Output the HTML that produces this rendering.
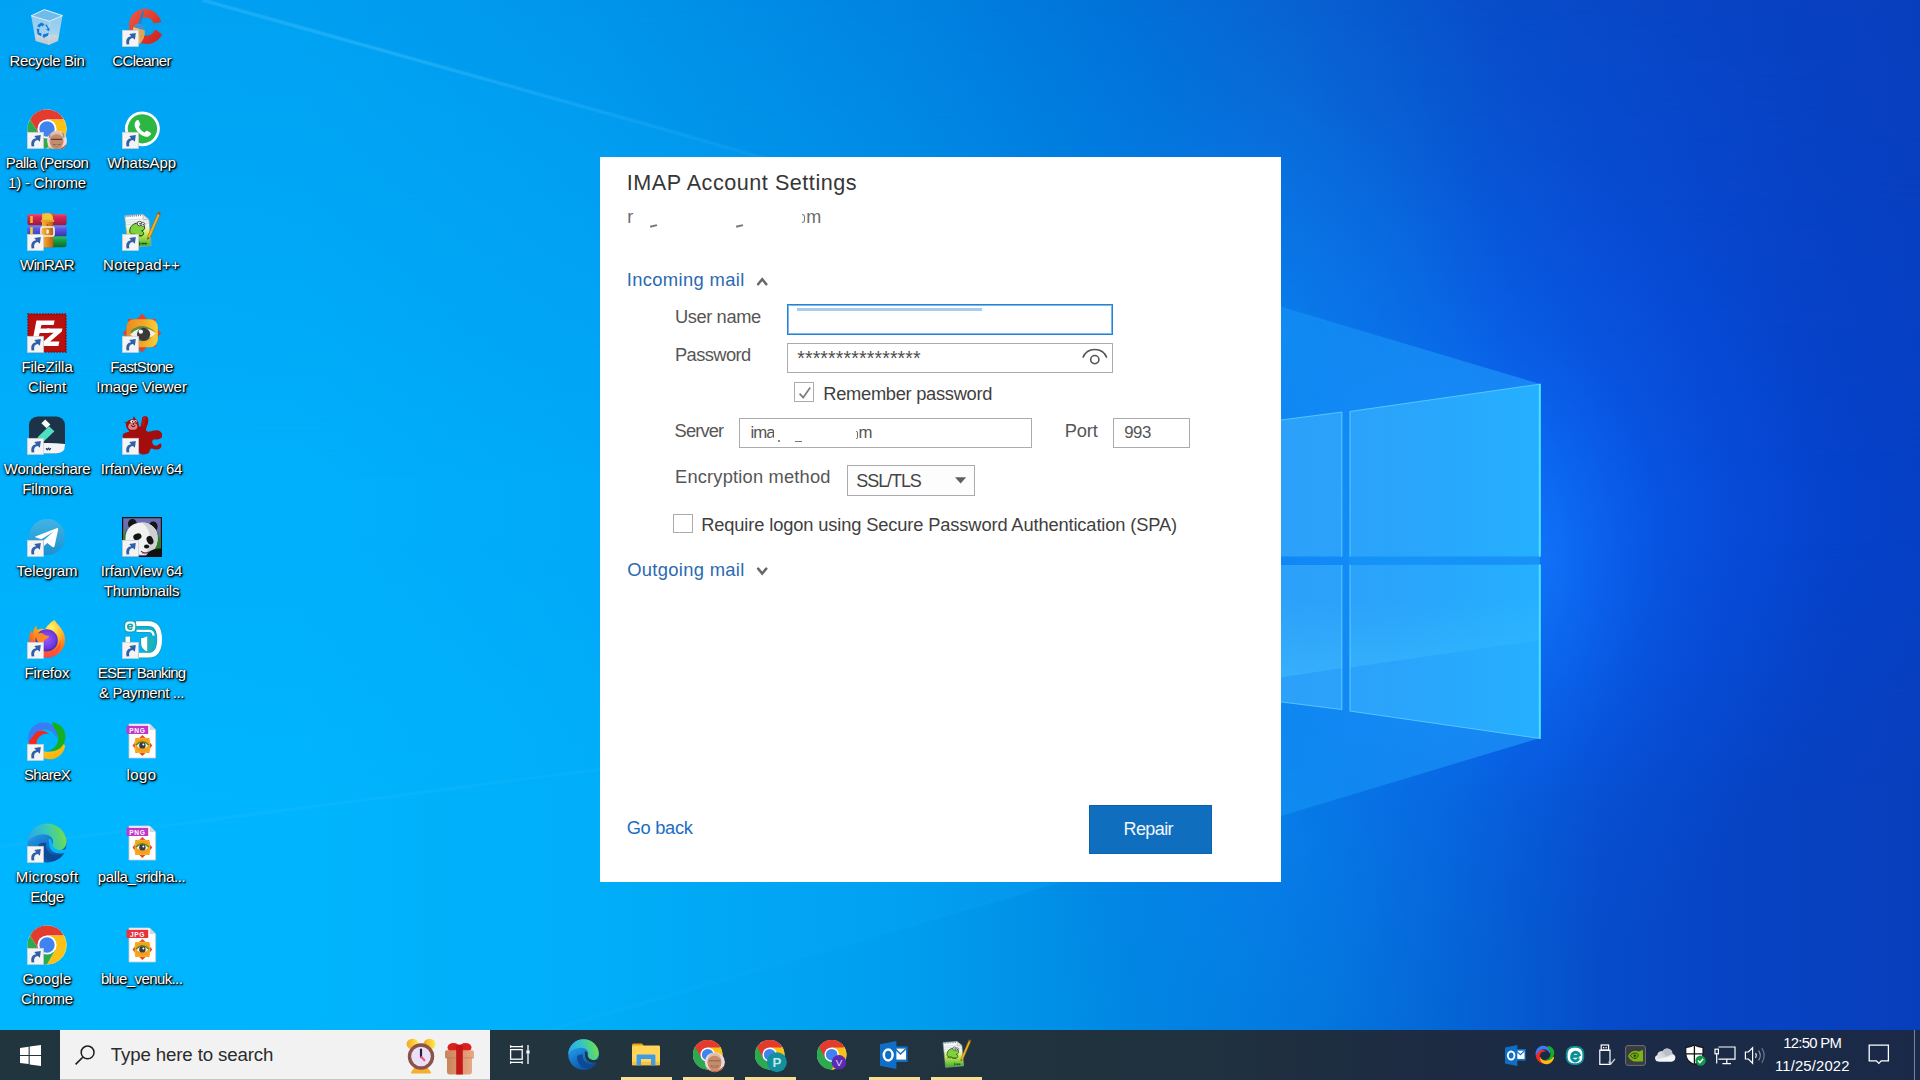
<!DOCTYPE html>
<html lang="en"><head><meta charset="utf-8"><title>IMAP Account Settings</title>
<style>
*{margin:0;padding:0;box-sizing:border-box}
html,body{width:1920px;height:1080px;overflow:hidden;background:#0078d7}
body{font-family:"Liberation Sans",sans-serif;position:relative}
#wall{position:absolute;left:0;top:0;width:1920px;height:1080px;display:block}
.abs{position:absolute}
span{position:absolute;white-space:nowrap;line-height:1}
#dlg{position:absolute;left:600px;top:157px;width:681px;height:725px;background:#fff}
#dlg span,#dlg div,#dlg svg{position:absolute}
#tb{position:absolute;left:0;top:1030px;width:1920px;height:50px}
#tb span,#tb div,#tb svg{position:absolute}
#tb svg,#dlg svg{overflow:visible}
.ic{position:absolute;width:96px;text-align:center}
.ic svg{position:absolute;left:28px;top:0;width:40px;height:40px;overflow:visible}
.ic .lb{position:absolute;left:-10px;width:116px;top:44px;color:#fff;font-size:14.4px;line-height:20px;white-space:normal;text-align:center;
 text-shadow:0 1px 2px rgba(0,0,0,.95),0 0 3px rgba(0,0,0,.7),1px 1px 1px rgba(0,0,0,.6)}
</style></head>
<body>
<svg id="wall" width="1920" height="1080" viewBox="0 0 1920 1080">
<defs>
<linearGradient id="gT" x1="0" x2="1" y1="0" y2="0"><stop offset="0.0000" stop-color="#00a0f2"/><stop offset="0.1562" stop-color="#009ef0"/><stop offset="0.3125" stop-color="#0094ea"/><stop offset="0.4688" stop-color="#0082e0"/><stop offset="0.5729" stop-color="#0072d8"/><stop offset="0.6677" stop-color="#0862d0"/><stop offset="0.7812" stop-color="#084bc8"/><stop offset="0.8854" stop-color="#0844c4"/><stop offset="1.0000" stop-color="#083ebc"/></linearGradient>
<linearGradient id="gM" x1="0" x2="1" y1="0" y2="0"><stop offset="0.0000" stop-color="#00affc"/><stop offset="0.1562" stop-color="#00affc"/><stop offset="0.3125" stop-color="#00a8f8"/><stop offset="0.4688" stop-color="#009af0"/><stop offset="0.5729" stop-color="#008cec"/><stop offset="0.6677" stop-color="#0a82ec"/><stop offset="0.7292" stop-color="#0a75e6"/><stop offset="0.7812" stop-color="#0862e6"/><stop offset="0.8333" stop-color="#0852e0"/><stop offset="0.8854" stop-color="#064ad8"/><stop offset="0.9375" stop-color="#0644ce"/><stop offset="1.0000" stop-color="#0540c6"/></linearGradient>
<linearGradient id="gB" x1="0" x2="1" y1="0" y2="0"><stop offset="0.0000" stop-color="#00b6fe"/><stop offset="0.1562" stop-color="#00b5fd"/><stop offset="0.3125" stop-color="#00adf7"/><stop offset="0.4688" stop-color="#009eee"/><stop offset="0.5990" stop-color="#0086e2"/><stop offset="0.6771" stop-color="#0278dc"/><stop offset="0.7812" stop-color="#055ed2"/><stop offset="0.8333" stop-color="#064cca"/><stop offset="0.8854" stop-color="#0645c6"/><stop offset="1.0000" stop-color="#083ebb"/></linearGradient>
<linearGradient id="gVt" gradientUnits="userSpaceOnUse" x1="0" x2="0" y1="-20" y2="480"><stop offset="0" stop-color="#fff" stop-opacity="1"/><stop offset="1" stop-color="#fff" stop-opacity="0"/></linearGradient>
<linearGradient id="gVb" gradientUnits="userSpaceOnUse" x1="0" x2="0" y1="540" y2="800"><stop offset="0" stop-color="#fff" stop-opacity="0"/><stop offset="1" stop-color="#fff" stop-opacity="1"/></linearGradient>
<mask id="mT"><rect width="1920" height="1080" fill="url(#gVt)"/></mask>
<mask id="mB"><rect width="1920" height="1080" fill="url(#gVb)"/></mask>
<radialGradient id="glow" gradientUnits="userSpaceOnUse" cx="1430" cy="560" r="400" gradientTransform="translate(1430 560) scale(1 1.1) translate(-1430 -560)">
<stop offset="0" stop-color="#0a82f8" stop-opacity=".9"/><stop offset=".3" stop-color="#0a76f4" stop-opacity=".75"/><stop offset=".6" stop-color="#0a5eea" stop-opacity=".34"/><stop offset="1" stop-color="#0850e0" stop-opacity="0"/></radialGradient>
<radialGradient id="eglow"><stop offset="0" stop-color="#1a70ff" stop-opacity=".42"/><stop offset=".5" stop-color="#0e5ef6" stop-opacity=".2"/><stop offset="1" stop-color="#0a50ec" stop-opacity="0"/></radialGradient>
<radialGradient id="haze"><stop offset="0" stop-color="#0a8af2" stop-opacity=".5"/><stop offset=".5" stop-color="#0a80ee" stop-opacity=".27"/><stop offset="1" stop-color="#0a74e8" stop-opacity="0"/></radialGradient>
<linearGradient id="beam" gradientUnits="userSpaceOnUse" x1="1540" x2="0" y1="0" y2="0"><stop offset="0" stop-color="#26a6ff" stop-opacity=".55"/><stop offset=".17" stop-color="#1aa4ff" stop-opacity=".36"/><stop offset=".45" stop-color="#08aeff" stop-opacity=".13"/><stop offset="1" stop-color="#00baff" stop-opacity=".09"/></linearGradient>
<linearGradient id="edge" gradientUnits="userSpaceOnUse" x1="1540" x2="0" y1="0" y2="0"><stop offset="0" stop-color="#48c0ff" stop-opacity="0"/><stop offset=".5" stop-color="#48c0ff" stop-opacity=".14"/><stop offset=".75" stop-color="#50c8ff" stop-opacity=".55"/><stop offset="1" stop-color="#50c8ff" stop-opacity=".4"/></linearGradient>
<linearGradient id="pane" gradientUnits="userSpaceOnUse" x1="1215" x2="1540" y1="0" y2="0"><stop offset="0" stop-color="#2f9ef8"/><stop offset=".55" stop-color="#2aa4fb"/><stop offset="1" stop-color="#25b0ff"/></linearGradient>
<linearGradient id="refl" gradientUnits="userSpaceOnUse" x1="0" x2="0" y1="600" y2="670"><stop offset="0" stop-color="#3fc0ff" stop-opacity="0"/><stop offset="1" stop-color="#45c8ff" stop-opacity=".35"/></linearGradient>
</defs>
<rect width="1920" height="1080" fill="url(#gM)"/>
<rect width="1920" height="1080" fill="url(#gT)" mask="url(#mT)"/>
<rect width="1920" height="1080" fill="url(#gB)" mask="url(#mB)"/>
<rect width="1920" height="1080" fill="url(#glow)"/>
<ellipse cx="1270" cy="335" rx="250" ry="250" fill="url(#haze)"/><ellipse cx="1270" cy="830" rx="250" ry="290" fill="url(#haze)"/>
<ellipse cx="1545" cy="561" rx="130" ry="270" fill="url(#eglow)"/>
<polygon points="1540,384 1281,307 660,128 202.5,0 -200,-113 -200,1247 596,1017 1018,895 1540,738" fill="url(#beam)"/>
<g fill="none" stroke="url(#edge)"><path d="M1540 384 L1281 307 L660 128 L202.5 0" stroke-width="4" opacity=".45"/><path d="M1540 384 L1281 307 L660 128 L202.5 0" stroke-width="1.8" opacity=".3"/>
<path d="M1540 738 L1018 895 L596 1017 L-200 1247" stroke-width="4" opacity=".2"/></g>
<path d="M-10 848 L180 823.7 L600 769.4 L1281 681" stroke="#40c8ff" stroke-opacity=".12" stroke-width="3" fill="none"/>
<polygon points="1540,384 1540,738 1349,711 1349,411" fill="#1596f6" opacity=".6"/>
<g fill="url(#pane)">
<polygon points="1349.6,411.5 1540.6,384 1540.6,556.6 1349.6,556.6"/>
<polygon points="1349.6,565 1540.6,564.6 1540.6,738.6 1349.6,711"/>
<polygon points="1215,428.6 1342.3,412 1342.3,556.6 1215,556.6"/>
<polygon points="1215,565 1342.3,565 1342.3,709.6 1215,693.6"/>
</g>
<polygon points="1349.6,565 1540.6,564.6 1540.6,640 1349.6,667.6" fill="url(#refl)"/>
<polygon points="1215,565 1342.3,565 1342.3,668 1215,687.4" fill="url(#refl)"/>
<g fill="none" stroke="#52e4fc" stroke-width="2" opacity=".92">
<line x1="1539.8" y1="384" x2="1539.8" y2="556.6"/><line x1="1539.8" y1="564.6" x2="1539.8" y2="738.6"/>
</g>
<g fill="none" stroke="#66d4ff" stroke-width="1" opacity=".75">
<line x1="1349.6" y1="411.5" x2="1540.6" y2="384"/><line x1="1349.6" y1="711" x2="1540.6" y2="738.6"/>
<line x1="1215" y1="428.6" x2="1342.3" y2="412"/><line x1="1215" y1="693.6" x2="1342.3" y2="709.6"/>
<line x1="1341.8" y1="412" x2="1341.8" y2="556.6"/><line x1="1341.8" y1="565" x2="1341.8" y2="709.6"/>
<line x1="1350.1" y1="412" x2="1350.1" y2="556.6"/><line x1="1350.1" y1="565" x2="1350.1" y2="711"/>
</g>
</svg>
<div id="icons">
<svg class="abs" style="left:27.0px;top:7px" width="40" height="40" viewBox="0 0 40 40"><defs><linearGradient id="rb1_1" x1="0" x2="0" y1="0" y2="1"><stop offset="0" stop-color="#8fc9ec"/><stop offset=".7" stop-color="#a9d6f0"/><stop offset=".72" stop-color="#d5d9de"/><stop offset="1" stop-color="#c3c8ce"/></linearGradient></defs>
<path d="M4.2 8.8 L17.4 2.6 L35.6 8.6 L31 34 L22 38 L8.6 34Z" fill="url(#rb1_1)" opacity=".96"/>
<path d="M4.2 8.8 L17.4 2.6 L35.6 8.6 L22.6 14.2Z" fill="#6fbcea"/><path d="M4.2 8.8 L17.4 2.6 L35.6 8.6 L22.6 14.2Z" fill="none" stroke="#d9f0fb" stroke-width="1"/>
<path d="M22.6 14.2 L22 38" stroke="#c7e6f6" stroke-width=".7" opacity=".8"/>
<g fill="#1777d8"><path d="M11.4 17.6 L14.4 15.6 L17.6 17.2 L15.6 19.4 L14.2 18.6 L12.8 20.4 L10.2 19.2Z"/><path d="M18.2 18 L20.8 21.6 L19.2 22.4 L22.2 24.4 L22.6 20.4 L21.4 21 L19.8 17.6Z"/><path d="M9.6 21.4 L12.4 22 L12 25.4 L14.6 26.6 L14.2 29.2 L10.6 27.2Z"/><path d="M16.4 27.2 L20.6 26.2 L21.8 25.4 L21 28.8 L17.6 30.2 L17.8 31.6 L15.4 29.6 L16.8 26.4Z"/></g></svg>
<span style="left:9.5px;top:52.60px;font-size:15px;color:#fff;letter-spacing:-0.382px;text-shadow:1px 1px 1px rgba(0,0,0,.95),1px 1px 2px rgba(0,0,0,.9),0 1px 3px rgba(0,0,0,.75),0 0 2px rgba(0,0,0,.6);">Recycle Bin</span>
<svg class="abs" style="left:121.6px;top:7px" width="40" height="40" viewBox="0 0 40 40"><defs><linearGradient id="cc1_2" x1="0" x2="1" y1="0" y2="1"><stop offset="0" stop-color="#f25a43"/><stop offset="1" stop-color="#c9201c"/></linearGradient></defs>
<path d="M39.4 15 C36.4 5.6 28 1 20.6 2 C12 3.2 6.6 10.4 7 19.6 C7.6 29.6 15 36.8 24 37 C31 37 37 33.4 40 27.4 L33.4 22.6 C31 26.4 28.4 28.8 24.2 28.8 C19 28.8 15.6 24.6 15.6 19.6 C15.6 14 19.4 10.6 24 10.6 C27.4 10.6 30.4 12.6 31.8 16.6Z" fill="url(#cc1_2)"/>
<path d="M20.4 3.8 L22.2 4.4 L18.4 19 L15.8 18.2Z" fill="#2a7fc4"/>
<path d="M11.6 19.8 C12.6 16.6 16 15.6 19.4 17 C22.4 18.4 23.4 21 22.6 23.4 L11.6 19.8Z" fill="#3a93d6"/>
<path d="M11.4 20 L22.4 23.6 C23 28.6 21.4 33.4 17.8 36.6 C13.6 36 9.6 33.6 8 30.2 C9.8 27 11 23.6 11.4 20Z" fill="#f1c27a"/><path d="M16.4 21.6 L22.4 23.6 C23 28.6 21.4 33.4 17.8 36.6 C17.4 31 17.2 26 16.4 21.6Z" fill="#e0a457"/><rect x=".3" y="23.3" width="16.2" height="16.2" fill="#f4f4f4" stroke="#c9ccd2" stroke-width=".7"/><path d="M4.6 37.6 C3.4 32.6 5.4 29.4 9.2 29.2 L7.2 27 L13.8 26 L12.9 32.8 L10.9 30.9 C8.2 31.2 6.4 33.4 7.4 37.2 Z" fill="#2f5fa8"/></svg>
<span style="left:112.2px;top:52.60px;font-size:15px;color:#fff;letter-spacing:-0.571px;text-shadow:1px 1px 1px rgba(0,0,0,.95),1px 1px 2px rgba(0,0,0,.9),0 1px 3px rgba(0,0,0,.75),0 0 2px rgba(0,0,0,.6);">CCleaner</span>
<svg class="abs" style="left:27.0px;top:109px" width="40" height="40" viewBox="0 0 40 40"><circle cx="20" cy="20" r="19.6" fill="#fff"/>
<path d="M20 10.4 H36.9 A19.5 19.5 0 0 0 3.11 10.25 L11.7 25.1Z" fill="#e33b2e"/>
<path d="M28.3 24.8 L20 39.5 A19.5 19.5 0 0 0 36.9 10.4 H20Z" fill="#fbc116"/>
<path d="M11.7 24.8 L3.11 10.25 A19.5 19.5 0 0 0 20 39.5 L28.3 24.8Z" fill="#2da94f"/>
<circle cx="20" cy="20" r="9.6" fill="#fff"/><circle cx="20" cy="20" r="7.7" fill="#3f82f0"/><clipPath id="av_3"><circle cx="30" cy="31.7" r="10"/></clipPath><g clip-path="url(#av_3)"><rect x="19" y="21" width="22" height="22" fill="#efd9dc"/>
<path d="M19 42 L21 37 Q30 45 39.4 35 L41 42Z" fill="#c6562e"/><ellipse cx="29.6" cy="31.8" rx="7" ry="8.8" fill="#c78b69"/><path d="M23 29 Q23.6 22.4 29.6 22.2 Q35.8 22.4 36.4 29 Q33.6 25.2 29.6 25.2 Q25.6 25.2 23 29Z" fill="#dcbfae"/>
<path d="M22.6 28.6 Q22.2 25 24.4 23.6 M36.8 28.6 Q37.2 25 35 23.6" stroke="#8d8580" stroke-width="1.2" fill="none"/>
<path d="M24.2 30.4 h4.6 M30.6 30.4 h4.6 M28.8 30.4 h1.8" stroke="#4e4340" stroke-width="1.1"/><path d="M26 35.4 Q29.6 38.6 33.4 35.4 Q29.6 36.6 26 35.4Z" fill="#f7efe9" stroke="#7d4634" stroke-width=".6"/></g><rect x=".3" y="23.3" width="16.2" height="16.2" fill="#f4f4f4" stroke="#c9ccd2" stroke-width=".7"/><path d="M4.6 37.6 C3.4 32.6 5.4 29.4 9.2 29.2 L7.2 27 L13.8 26 L12.9 32.8 L10.9 30.9 C8.2 31.2 6.4 33.4 7.4 37.2 Z" fill="#2f5fa8"/></svg>
<span style="left:5.8px;top:154.60px;font-size:15px;color:#fff;letter-spacing:-0.581px;text-shadow:1px 1px 1px rgba(0,0,0,.95),1px 1px 2px rgba(0,0,0,.9),0 1px 3px rgba(0,0,0,.75),0 0 2px rgba(0,0,0,.6);">Palla (Person</span>
<span style="left:8.0px;top:174.60px;font-size:15px;color:#fff;letter-spacing:-0.184px;text-shadow:1px 1px 1px rgba(0,0,0,.95),1px 1px 2px rgba(0,0,0,.9),0 1px 3px rgba(0,0,0,.75),0 0 2px rgba(0,0,0,.6);">1) - Chrome</span>
<svg class="abs" style="left:121.6px;top:109px" width="40" height="40" viewBox="0 0 40 40"><path d="M20.4 2.4 A17.4 17.4 0 1 1 11.6 34.8 L3.6 37 L5.8 29.2 A17.4 17.4 0 0 1 20.4 2.4Z" fill="#fff"/>
<path d="M20.4 5.2 A14.6 14.6 0 1 1 12.2 31.8 L7.4 33.2 L8.8 28.6 A14.6 14.6 0 0 1 20.4 5.2Z" fill="#2bb741"/>
<path d="M14.6 11.6 C15.4 10.8 16.6 11 17 12 L18.2 14.8 C18.5 15.6 18.2 16.2 17.6 16.8 L16.8 17.7 C18 20.3 19.9 22.2 22.5 23.5 L23.6 22.4 C24.2 21.8 24.9 21.7 25.6 22.1 L28.2 23.5 C29.1 24 29.2 25 28.6 25.8 C27.2 27.6 25.2 28.3 22.8 27.5 C17.8 25.8 14.2 22 12.8 17.2 C12.2 15 12.9 13.1 14.6 11.6Z" fill="#fff"/><rect x=".3" y="23.3" width="16.2" height="16.2" fill="#f4f4f4" stroke="#c9ccd2" stroke-width=".7"/><path d="M4.6 37.6 C3.4 32.6 5.4 29.4 9.2 29.2 L7.2 27 L13.8 26 L12.9 32.8 L10.9 30.9 C8.2 31.2 6.4 33.4 7.4 37.2 Z" fill="#2f5fa8"/></svg>
<span style="left:107.2px;top:154.60px;font-size:15px;color:#fff;letter-spacing:-0.050px;text-shadow:1px 1px 1px rgba(0,0,0,.95),1px 1px 2px rgba(0,0,0,.9),0 1px 3px rgba(0,0,0,.75),0 0 2px rgba(0,0,0,.6);">WhatsApp</span>
<svg class="abs" style="left:27.0px;top:211px" width="40" height="40" viewBox="0 0 40 40"><defs><linearGradient id="wr1_5" x1="0" x2="0" y1="0" y2="1"><stop offset="0" stop-color="#e9507f"/><stop offset=".25" stop-color="#d42a5a"/><stop offset="1" stop-color="#9c1741"/></linearGradient>
<linearGradient id="wr2_5" x1="0" x2="0" y1="0" y2="1"><stop offset="0" stop-color="#7f86f6"/><stop offset=".3" stop-color="#5a59e0"/><stop offset="1" stop-color="#3a32a8"/></linearGradient>
<linearGradient id="wr3_5" x1="0" x2="0" y1="0" y2="1"><stop offset="0" stop-color="#2fc25a"/><stop offset=".35" stop-color="#18a043"/><stop offset="1" stop-color="#0b6a2a"/></linearGradient>
<linearGradient id="wr4_5" x1="0" x2="1" y1="0" y2="0"><stop offset="0" stop-color="#f4b53c"/><stop offset=".5" stop-color="#e28a1e"/><stop offset="1" stop-color="#b8620f"/></linearGradient></defs>
<rect x=".4" y="3" width="39.2" height="11.4" rx="2.6" fill="url(#wr1_5)"/><rect x=".4" y="14.4" width="39.2" height="11.2" rx="2.6" fill="url(#wr2_5)"/><rect x=".4" y="25.6" width="39.2" height="10.6" rx="2.6" fill="url(#wr3_5)"/>
<rect x="3.2" y="5" width="2.6" height="7" fill="#f7b728"/><rect x="3.2" y="16.2" width="2.6" height="7.4" fill="#f7cf28"/>
<rect x="15" y="2.2" width="11.2" height="34.2" rx="1.2" fill="url(#wr4_5)"/><path d="M15 9.6 C15 4 17 2.2 20.6 2.2 C24.2 2.2 26.2 4 26.2 9.6Z" fill="#f6c33a"/><path d="M14 8.8 H27.2 V11 H14Z" fill="#e9a12a"/>
<rect x="14" y="16" width="13" height="9" rx="1.6" fill="none" stroke="#f4f1ea" stroke-width="1.7"/><rect x="19.4" y="18.4" width="2.4" height="4.4" rx="1" fill="#f4f1ea"/><circle cx="20.6" cy="14" r=".7" fill="#7a4a10"/><rect x=".3" y="23.3" width="16.2" height="16.2" fill="#f4f4f4" stroke="#c9ccd2" stroke-width=".7"/><path d="M4.6 37.6 C3.4 32.6 5.4 29.4 9.2 29.2 L7.2 27 L13.8 26 L12.9 32.8 L10.9 30.9 C8.2 31.2 6.4 33.4 7.4 37.2 Z" fill="#2f5fa8"/></svg>
<span style="left:20.1px;top:256.60px;font-size:15px;color:#fff;letter-spacing:-0.617px;text-shadow:1px 1px 1px rgba(0,0,0,.95),1px 1px 2px rgba(0,0,0,.9),0 1px 3px rgba(0,0,0,.75),0 0 2px rgba(0,0,0,.6);">WinRAR</span>
<svg class="abs" style="left:121.6px;top:211px" width="40" height="40" viewBox="0 0 40 40"><defs><linearGradient id="np1_6" x1="0" x2="0" y1="0" y2="1"><stop offset="0" stop-color="#ffffff"/><stop offset=".38" stop-color="#f1f6e4"/><stop offset=".58" stop-color="#cfe85a"/><stop offset="1" stop-color="#35b02a"/></linearGradient></defs>
<path d="M2.6 4.6 L20.6 3.2 L27 8.4 L29.2 34.6 L6 36.6Z" fill="url(#np1_6)" stroke="#9aa09a" stroke-width=".8"/><path d="M20.6 3.2 L21.4 8.6 L27 8.4Z" fill="#e4e8ea" stroke="#9aa09a" stroke-width=".6"/>
<path d="M3.4 5.6 L20 4.3" stroke="#5d7fb8" stroke-width="1.5" stroke-dasharray="1 1.1"/>
<path d="M4 9.2 L21 8 M4.2 11.4 L26.6 10 M4.4 13.6 L26.8 12.2" stroke="#b5cdea" stroke-width=".6"/>
<path d="M8 21.6 C7 16.8 10 13.2 14.4 12.2 C18 11.4 21.6 12.6 22.6 15.6 C23.2 18 21.6 19.6 19.6 19.8 C21.6 20.6 22.4 22.6 21 24 C18.6 25.8 14 24.8 12.6 22.8 C11.2 23.8 9 23.4 8 21.6Z" fill="#7fd23c" stroke="#1f4d12" stroke-width="1"/>
<circle cx="17.6" cy="12.6" r="2.3" fill="#fafaf6" stroke="#333" stroke-width=".8"/><circle cx="21" cy="13.4" r="1.9" fill="#fafaf6" stroke="#333" stroke-width=".7"/><circle cx="18" cy="12.8" r=".8" fill="#111"/><circle cx="21.2" cy="13.6" r=".7" fill="#111"/>
<path d="M8 24.6 l2 -1 l1.6 1.2 l2 -1 l2 1.2 l2 -.8 l2 1" stroke="#1f4d12" stroke-width=".8" fill="none"/>
<path d="M17.6 30.6 v4 M18.4 32.6 h7 M21 31.4 v2.4 M23.4 31.4 v2.4" stroke="#14521a" stroke-width=".9" fill="none"/>
<path d="M36.4 1 L38.6 2.2 L28.6 25.8 L25.6 28.4 L26 24.6Z" fill="#f4b41f" stroke="#94640f" stroke-width=".6"/><path d="M36.4 1 L38.6 2.2 L37.9 3.9 L35.7 2.7Z" fill="#b3402f"/><path d="M25.8 26.4 L25.6 28.4 L27.2 27Z" fill="#333"/><rect x=".3" y="23.3" width="16.2" height="16.2" fill="#f4f4f4" stroke="#c9ccd2" stroke-width=".7"/><path d="M4.6 37.6 C3.4 32.6 5.4 29.4 9.2 29.2 L7.2 27 L13.8 26 L12.9 32.8 L10.9 30.9 C8.2 31.2 6.4 33.4 7.4 37.2 Z" fill="#2f5fa8"/></svg>
<span style="left:103.1px;top:256.60px;font-size:15px;color:#fff;letter-spacing:0.308px;text-shadow:1px 1px 1px rgba(0,0,0,.95),1px 1px 2px rgba(0,0,0,.9),0 1px 3px rgba(0,0,0,.75),0 0 2px rgba(0,0,0,.6);">Notepad++</span>
<svg class="abs" style="left:27.0px;top:313px" width="40" height="40" viewBox="0 0 40 40"><rect x="1" y="1" width="38" height="38" fill="#b50e0e" stroke="#8f0a0a" stroke-width="1.6" stroke-dasharray="1.6 1.2"/><rect x="2.6" y="2.6" width="34.8" height="34.8" fill="#b80f0f"/>
<path d="M9.4 7.4 H27.6 L26.6 12 H14.4 L13.6 15.6 H22.8 L21.8 20 H12.6 L10.6 29.4 H5.2Z" fill="#fff"/>
<path d="M20 15.4 H35.4 L34.8 18.6 L23.2 28.6 H32.4 L31.4 33 H14.4 L15.2 29.4 L26.6 19.8 H19Z" fill="#fff"/><rect x=".3" y="23.3" width="16.2" height="16.2" fill="#f4f4f4" stroke="#c9ccd2" stroke-width=".7"/><path d="M4.6 37.6 C3.4 32.6 5.4 29.4 9.2 29.2 L7.2 27 L13.8 26 L12.9 32.8 L10.9 30.9 C8.2 31.2 6.4 33.4 7.4 37.2 Z" fill="#2f5fa8"/></svg>
<span style="left:21.4px;top:358.60px;font-size:15px;color:#fff;letter-spacing:-0.042px;text-shadow:1px 1px 1px rgba(0,0,0,.95),1px 1px 2px rgba(0,0,0,.9),0 1px 3px rgba(0,0,0,.75),0 0 2px rgba(0,0,0,.6);">FileZilla</span>
<span style="left:28.0px;top:378.60px;font-size:15px;color:#fff;letter-spacing:-0.058px;text-shadow:1px 1px 1px rgba(0,0,0,.95),1px 1px 2px rgba(0,0,0,.9),0 1px 3px rgba(0,0,0,.75),0 0 2px rgba(0,0,0,.6);">Client</span>
<svg class="abs" style="left:121.6px;top:313px" width="40" height="40" viewBox="0 0 40 40"><defs><linearGradient id="fs1_8" x1="0" x2="1" y1="0" y2="0"><stop offset="0" stop-color="#e88a26"/><stop offset=".5" stop-color="#f2a526"/><stop offset="1" stop-color="#f8cf36"/></linearGradient></defs>
<path d="M20 .6 L25 6 H34 V15 L39.4 20 L34 25 V34 H25 L20 39.4 L15 34 H6 V25 L.6 20 L6 15 V6 H15Z" fill="#e3422c"/>
<rect x="4.4" y="6.2" width="31.4" height="28" rx="7.6" fill="url(#fs1_8)"/>
<path d="M8 21.4 Q20 9 33.6 20.4 Q21 32.6 8 21.4Z" fill="#f1eee4"/><path d="M9 17.6 Q21 7.6 34 19.6 Q27 15 20 15.4 Q13 16 8.6 21Z" fill="#5c8f3a"/><path d="M8.4 22 Q18 30.6 30 24 Q20 33.6 8.4 22Z" fill="#6d9440" opacity=".9"/>
<circle cx="21.6" cy="21.4" r="6.6" fill="#3a3a3a"/><circle cx="18.8" cy="18.6" r="2.2" fill="#fff"/><rect x=".3" y="23.3" width="16.2" height="16.2" fill="#f4f4f4" stroke="#c9ccd2" stroke-width=".7"/><path d="M4.6 37.6 C3.4 32.6 5.4 29.4 9.2 29.2 L7.2 27 L13.8 26 L12.9 32.8 L10.9 30.9 C8.2 31.2 6.4 33.4 7.4 37.2 Z" fill="#2f5fa8"/></svg>
<span style="left:110.3px;top:358.60px;font-size:15px;color:#fff;letter-spacing:-0.653px;text-shadow:1px 1px 1px rgba(0,0,0,.95),1px 1px 2px rgba(0,0,0,.9),0 1px 3px rgba(0,0,0,.75),0 0 2px rgba(0,0,0,.6);">FastStone</span>
<span style="left:96.3px;top:378.60px;font-size:15px;color:#fff;letter-spacing:-0.078px;text-shadow:1px 1px 1px rgba(0,0,0,.95),1px 1px 2px rgba(0,0,0,.9),0 1px 3px rgba(0,0,0,.75),0 0 2px rgba(0,0,0,.6);">Image Viewer</span>
<svg class="abs" style="left:27.0px;top:415px" width="40" height="40" viewBox="0 0 40 40"><rect x="2" y="1.6" width="36" height="36.8" rx="8.6" fill="#1d3448"/><path d="M2 29 Q20 27 38 29 V30 Q38 38.4 29.4 38.4 H10.6 Q2 38.4 2 30Z" fill="#f2f5f7"/>
<path d="M14.4 8.2 L18.2 4.6 L23.4 9.6 L19.6 13.2Z" fill="#f3fbf9"/><path d="M22 11.2 L27.4 16.2 L16.2 27 L10.8 27 L10.8 22Z" fill="#4fe0c4"/>
<path d="M19 33.2 l1.2 1.6 l1.2 -1.6 l1.2 1.6 l1.2 -1.6" fill="none" stroke="#1d3448" stroke-width="1.1"/><rect x=".3" y="23.3" width="16.2" height="16.2" fill="#f4f4f4" stroke="#c9ccd2" stroke-width=".7"/><path d="M4.6 37.6 C3.4 32.6 5.4 29.4 9.2 29.2 L7.2 27 L13.8 26 L12.9 32.8 L10.9 30.9 C8.2 31.2 6.4 33.4 7.4 37.2 Z" fill="#2f5fa8"/></svg>
<span style="left:3.8px;top:460.60px;font-size:15px;color:#fff;letter-spacing:-0.298px;text-shadow:1px 1px 1px rgba(0,0,0,.95),1px 1px 2px rgba(0,0,0,.9),0 1px 3px rgba(0,0,0,.75),0 0 2px rgba(0,0,0,.6);">Wondershare</span>
<span style="left:22.2px;top:480.60px;font-size:15px;color:#fff;letter-spacing:-0.072px;text-shadow:1px 1px 1px rgba(0,0,0,.95),1px 1px 2px rgba(0,0,0,.9),0 1px 3px rgba(0,0,0,.75),0 0 2px rgba(0,0,0,.6);">Filmora</span>
<svg class="abs" style="left:121.6px;top:415px" width="40" height="40" viewBox="0 0 40 40"><path d="M1.6 6.4 L4.5 7.5 C6 5 9 4 11 4.2 L11.7 1 L14 4.6 C16 6 17 8.5 16.8 11 L18.7 11.8 C19.5 8 19.8 4.5 20.4 2.2 C21.5 .8 24.5 .8 25.6 2.2 C26.8 4.5 26.4 8 25 11 C24 13.5 23.6 15 24.4 16 C26 17.4 28 16.6 30 16 C33 15 36.5 15 38.6 16.8 C40.6 18.6 40.8 21 39.4 22.8 C37.6 24.8 34.6 24.6 32.4 24.2 C30.4 24.6 29.6 26.6 30.6 28.4 C31.6 30.2 33.4 31.2 35.2 30.4 C36.6 29.6 37.8 28.2 38.8 28.6 C39.8 29.4 39.6 32 38.4 33.2 C36.6 34.8 33 35 30 33.6 C28.6 33.4 28 34.6 27.6 36.4 C27 38.4 24 39.6 20.6 39.4 C18 39 16.6 37.6 16 35 L2 24 C.4 22.6 .2 20.4 1.4 19 C3 17.4 5.6 17.6 7.6 16.6 C5 14.6 3.6 11.6 4 8.6Z" fill="#a30d0d"/>
<path d="M20.4 3 C21.5 1.8 23 1.6 24 2.4 C23 6 22 10 21 13 C20.4 10 20.2 6 20.4 3Z" fill="#c21a1a" opacity=".7"/>
<ellipse cx="10.8" cy="11.4" rx="4.6" ry="3.4" fill="#e79a9a" opacity=".85"/><ellipse cx="10.2" cy="6.6" rx="1.9" ry="1.5" fill="#fff"/><ellipse cx="13.4" cy="6.4" rx="1.3" ry="1.1" fill="#fff"/><circle cx="10.6" cy="6.8" r=".8" fill="#111"/><circle cx="13.4" cy="6.6" r=".6" fill="#111"/><path d="M9 10.4 q2 2.4 4.4 .4" stroke="#3a0505" stroke-width=".9" fill="none"/><circle cx="11.4" cy="9" r=".8" fill="#2a0404"/><rect x=".3" y="23.3" width="16.2" height="16.2" fill="#f4f4f4" stroke="#c9ccd2" stroke-width=".7"/><path d="M4.6 37.6 C3.4 32.6 5.4 29.4 9.2 29.2 L7.2 27 L13.8 26 L12.9 32.8 L10.9 30.9 C8.2 31.2 6.4 33.4 7.4 37.2 Z" fill="#2f5fa8"/></svg>
<span style="left:100.8px;top:460.60px;font-size:15px;color:#fff;letter-spacing:-0.134px;text-shadow:1px 1px 1px rgba(0,0,0,.95),1px 1px 2px rgba(0,0,0,.9),0 1px 3px rgba(0,0,0,.75),0 0 2px rgba(0,0,0,.6);">IrfanView 64</span>
<svg class="abs" style="left:27.0px;top:517px" width="40" height="40" viewBox="0 0 40 40"><defs><linearGradient id="tg1_11" x1="0" x2="0" y1="0" y2="1"><stop offset="0" stop-color="#41b4e6"/><stop offset="1" stop-color="#1e90cf"/></linearGradient></defs><circle cx="20" cy="20" r="18" fill="url(#tg1_11)"/>
<path d="M8.4 19.6 L29.6 11.2 C30.6 10.8 31.4 11.5 31.1 12.7 L27.6 29 C27.3 30.2 26.5 30.5 25.5 29.9 L20.2 26 L17.6 28.5 C17.2 28.9 16.9 28.8 16.8 28.2 L16.6 23.4 L26.6 14.6 L14.4 22.2 L9 20.6 C8 20.3 7.8 19.9 8.4 19.6Z" fill="#fff"/><rect x=".3" y="23.3" width="16.2" height="16.2" fill="#f4f4f4" stroke="#c9ccd2" stroke-width=".7"/><path d="M4.6 37.6 C3.4 32.6 5.4 29.4 9.2 29.2 L7.2 27 L13.8 26 L12.9 32.8 L10.9 30.9 C8.2 31.2 6.4 33.4 7.4 37.2 Z" fill="#2f5fa8"/></svg>
<span style="left:16.5px;top:562.60px;font-size:15px;color:#fff;letter-spacing:-0.087px;text-shadow:1px 1px 1px rgba(0,0,0,.95),1px 1px 2px rgba(0,0,0,.9),0 1px 3px rgba(0,0,0,.75),0 0 2px rgba(0,0,0,.6);">Telegram</span>
<svg class="abs" style="left:121.6px;top:517px" width="40" height="40" viewBox="0 0 40 40"><rect x=".6" y=".6" width="38.8" height="38.8" fill="#6b6eb0" stroke="#111" stroke-width="1.2"/>
<path d="M1.2 39 L1.6 12 L3 20 L4 9 L5.4 19 L7 12 L7.4 39Z" fill="#2c7a2c"/><path d="M32 39 L33.4 16 L34.6 24 L36 12 L37 22 L38.8 15 V39Z" fill="#2c7a2c"/>
<ellipse cx="10.4" cy="7" rx="4.4" ry="5" fill="#141414"/><ellipse cx="31.2" cy="9.6" rx="4.4" ry="5" fill="#141414"/>
<path d="M3.4 22 C3.4 11 11 5.6 20 5.6 C29.6 5.6 36.4 12.4 35.6 22.4 C35 31 30 37.6 21.6 38 C11 38.4 3.4 31 3.4 22Z" fill="#f1f1f1"/>
<path d="M20 5.6 C29.6 5.6 36.4 12.4 35.6 22.4 C35 31 30 37.6 21.6 38 C28 32 30 24 27 15 C25.4 11 23 8 20 5.6Z" fill="#cfcfd4"/>
<ellipse cx="15.4" cy="19.8" rx="4.2" ry="3.2" fill="#141414" transform="rotate(-20 15.4 19.8)"/><ellipse cx="28" cy="23.2" rx="3.2" ry="4.4" fill="#141414" transform="rotate(-24 28 23.2)"/>
<ellipse cx="24.6" cy="29.6" rx="2.6" ry="2" fill="#141414"/><path d="M19 34.4 Q23 37.4 27.6 34.6" stroke="#222" stroke-width="1.1" fill="none"/><path d="M20.4 36.2 h4" stroke="#d8506a" stroke-width="1.2"/>
<path d="M24 39.4 C26 34 32 31 39.4 31.6 V39.4Z" fill="#111"/><rect x=".3" y="23.3" width="16.2" height="16.2" fill="#f4f4f4" stroke="#c9ccd2" stroke-width=".7"/><path d="M4.6 37.6 C3.4 32.6 5.4 29.4 9.2 29.2 L7.2 27 L13.8 26 L12.9 32.8 L10.9 30.9 C8.2 31.2 6.4 33.4 7.4 37.2 Z" fill="#2f5fa8"/></svg>
<span style="left:100.8px;top:562.60px;font-size:15px;color:#fff;letter-spacing:-0.134px;text-shadow:1px 1px 1px rgba(0,0,0,.95),1px 1px 2px rgba(0,0,0,.9),0 1px 3px rgba(0,0,0,.75),0 0 2px rgba(0,0,0,.6);">IrfanView 64</span>
<span style="left:103.8px;top:582.60px;font-size:15px;color:#fff;letter-spacing:-0.204px;text-shadow:1px 1px 1px rgba(0,0,0,.95),1px 1px 2px rgba(0,0,0,.9),0 1px 3px rgba(0,0,0,.75),0 0 2px rgba(0,0,0,.6);">Thumbnails</span>
<svg class="abs" style="left:27.0px;top:619px" width="40" height="40" viewBox="0 0 40 40"><defs><radialGradient id="ff1_13" cx=".62" cy=".2" r=".95"><stop offset="0" stop-color="#fff36b"/><stop offset=".3" stop-color="#ffbd2e"/><stop offset=".6" stop-color="#ff7a1a"/><stop offset=".9" stop-color="#f0335a"/><stop offset="1" stop-color="#e1218c"/></radialGradient>
<radialGradient id="ff2_13" cx=".5" cy=".45" r=".55"><stop offset="0" stop-color="#9a59ff"/><stop offset=".7" stop-color="#6d3be0"/><stop offset="1" stop-color="#4527b2"/></radialGradient></defs>
<path d="M27.6 1 C29.4 4.4 31.4 5.6 33.8 9 C36.6 12.8 38.6 17.2 38 22.6 C37 32 29.6 38.8 20 38.8 C10 38.8 2 31.4 2 21.6 C2 17.4 3 14 4.4 11.6 C4.6 13 5 14 5.6 14.8 C5.8 11.4 7.4 8.4 9.4 6.6 C9.2 8.6 9.8 10 10.6 11 C13 9.6 16 9.6 18 10.4 C20.6 6 24 2.6 27.6 1Z" fill="url(#ff1_13)"/>
<circle cx="19.6" cy="21.4" r="11.2" fill="url(#ff2_13)"/>
<path d="M8 16.6 C10 14 13 13.4 15.6 14.4 C17.4 15.2 18.6 16.6 20.4 16.8 C22 17 22.6 17.6 21.6 18.6 C20.6 19.6 18.6 19.8 17.6 21.2 C16.6 22.6 17 24.4 15.2 24.4 C12 24.2 10 22 9.6 20 C9.4 18.6 8.6 17.6 8 16.6Z" fill="#ff8a1e"/>
<path d="M6 20 C7 28 13 33 20 33 C27.6 33 32.6 27.6 33 21.6 C34.6 26 32.4 31.6 28.6 34.6 C24 38 16.4 38.4 11.4 35 C6.6 31.6 4.8 26 6 20Z" fill="#ff4f3a" opacity=".85"/><rect x=".3" y="23.3" width="16.2" height="16.2" fill="#f4f4f4" stroke="#c9ccd2" stroke-width=".7"/><path d="M4.6 37.6 C3.4 32.6 5.4 29.4 9.2 29.2 L7.2 27 L13.8 26 L12.9 32.8 L10.9 30.9 C8.2 31.2 6.4 33.4 7.4 37.2 Z" fill="#2f5fa8"/></svg>
<span style="left:24.6px;top:664.60px;font-size:15px;color:#fff;letter-spacing:-0.149px;text-shadow:1px 1px 1px rgba(0,0,0,.95),1px 1px 2px rgba(0,0,0,.9),0 1px 3px rgba(0,0,0,.75),0 0 2px rgba(0,0,0,.6);">Firefox</span>
<svg class="abs" style="left:121.6px;top:619px" width="40" height="40" viewBox="0 0 40 40"><g fill="none" stroke-linecap="butt"><path d="M14 4.6 H26.4 C34.4 4.6 37.6 11 37.6 20.2 C37.6 29.6 34.4 36.2 26.4 36.2 H17" stroke="#16a3a6" stroke-width="6.6"/><path d="M5.8 17 V38" stroke="#16a3a6" stroke-width="6.4"/><path d="M14.6 11.8 H27 C30 11.8 31.4 13.6 31.6 16.6" stroke="#16a3a6" stroke-width="4"/>
<path d="M14 4.6 H26.4 C34.4 4.6 37.6 11 37.6 20.2 C37.6 29.6 34.4 36.2 26.4 36.2 H17" stroke="#fff" stroke-width="4.8"/><path d="M5.8 17.6 V37.4" stroke="#fff" stroke-width="4.6"/><path d="M14.6 11.8 H27 C30 11.8 31.4 13.6 31.6 16.6" stroke="#fff" stroke-width="2.2"/></g>
<rect x="2" y="1.4" width="12.4" height="12.4" rx="4.6" fill="#16a3a6"/><rect x="3.2" y="2.6" width="10" height="10" rx="3.6" fill="#fff"/><path d="M10.6 7.8 H5.8 A2.4 2.4 0 0 0 10.2 9.2 M5.8 7.6 A2.4 2.4 0 0 1 10.6 7.6" fill="none" stroke="#16a3a6" stroke-width="1.6"/>
<path d="M18.6 18.6 C21 18.6 23.4 18 25.2 16.6 C27 18 29.2 18.6 31.8 18.6 V24.6 C31.8 28.8 29.2 31.6 25.2 33.2 C21.2 31.6 18.6 28.8 18.6 24.6Z" fill="#fff" stroke="#16a3a6" stroke-width="1.1"/><path d="M25.2 16.6 C27 18 29.2 18.6 31.8 18.6 V24.6 C31.8 28.8 29.2 31.6 25.2 33.2Z" fill="#1fb3b6"/><rect x=".3" y="23.3" width="16.2" height="16.2" fill="#f4f4f4" stroke="#c9ccd2" stroke-width=".7"/><path d="M4.6 37.6 C3.4 32.6 5.4 29.4 9.2 29.2 L7.2 27 L13.8 26 L12.9 32.8 L10.9 30.9 C8.2 31.2 6.4 33.4 7.4 37.2 Z" fill="#2f5fa8"/></svg>
<span style="left:97.8px;top:664.60px;font-size:15px;color:#fff;letter-spacing:-0.815px;text-shadow:1px 1px 1px rgba(0,0,0,.95),1px 1px 2px rgba(0,0,0,.9),0 1px 3px rgba(0,0,0,.75),0 0 2px rgba(0,0,0,.6);">ESET Banking</span>
<span style="left:99.1px;top:684.60px;font-size:15px;color:#fff;letter-spacing:-0.388px;text-shadow:1px 1px 1px rgba(0,0,0,.95),1px 1px 2px rgba(0,0,0,.9),0 1px 3px rgba(0,0,0,.75),0 0 2px rgba(0,0,0,.6);">&amp; Payment ...</span>
<svg class="abs" style="left:27.0px;top:721px" width="40" height="40" viewBox="0 0 40 40"><defs><linearGradient id="sx1_15" x1="0" x2="1" y1="0" y2="1"><stop offset="0" stop-color="#ffd21a"/><stop offset="1" stop-color="#f7a90c"/></linearGradient></defs>
<path d="M38.2 25 C37 32 31 38 24 38.3 C18 38.5 12.5 35.5 10 31 C9 29 9 26 10.5 24 C12 28 16 31 21 31 C27 31 33 28 36 23 C37 23.5 38 24 38.2 25Z" fill="url(#sx1_15)"/>
<path d="M1.7 21 C2 15 6 10 12.5 9.4 C16 9.2 20 10.5 22.5 13.2 C18 12 13.5 13.5 11 17.5 C9 20.5 9 24 10.5 27 C6 27.5 2.5 25 1.7 21Z" fill="#f2291f"/>
<path d="M1.5 14 C3 6 10 1.3 16 1.4 C22 1.5 27 4 29 8 C31 12 31 15 29.3 17 C28 13 24 9 19 8.6 C13 8.4 8 11 5.5 16 C4 18 2.5 19 1.5 21 C1 18.6 1 16 1.5 14Z" fill="#3b7bf5"/>
<path d="M25 1.3 C31 1.5 37 6 38.3 13 C39.3 20 36 26 31 28.5 C27 30.5 23 30.2 21.5 29.6 C26 28.5 30 25 30.8 20.5 C31.6 16 30.5 11 27 7 C26 5 25 3 25 1.3Z" fill="#12b022"/><rect x=".3" y="23.3" width="16.2" height="16.2" fill="#f4f4f4" stroke="#c9ccd2" stroke-width=".7"/><path d="M4.6 37.6 C3.4 32.6 5.4 29.4 9.2 29.2 L7.2 27 L13.8 26 L12.9 32.8 L10.9 30.9 C8.2 31.2 6.4 33.4 7.4 37.2 Z" fill="#2f5fa8"/></svg>
<span style="left:23.9px;top:766.60px;font-size:15px;color:#fff;letter-spacing:-0.622px;text-shadow:1px 1px 1px rgba(0,0,0,.95),1px 1px 2px rgba(0,0,0,.9),0 1px 3px rgba(0,0,0,.75),0 0 2px rgba(0,0,0,.6);">ShareX</span>
<svg class="abs" style="left:121.6px;top:721px" width="40" height="40" viewBox="0 0 40 40"><g transform="translate(0 2)"><path d="M7 1 H27.6 L33.6 7 V35 H7Z" fill="#fdfdfd" stroke="#c8ccd0" stroke-width=".8"/><path d="M27.6 1 V7 H33.6Z" fill="#d4d9de"/>
<rect x="4.6" y="2.8" width="21.6" height="8.2" fill="#c037c8"/><text x="15.4" y="9.5" font-size="6.6" font-weight="bold" fill="#fff" text-anchor="middle" letter-spacing=".6" font-family="Liberation Sans, sans-serif">PNG</text>
<g transform="translate(20.4 22.4) scale(1.1) translate(-20.4 -20.8)"><path d="M20.4 11.4 L23.2 14 H26.6 V17.4 L29.4 20.8 L26.6 24.2 V27.6 H23.2 L20.4 30.4 L17.6 27.6 H14.2 V24.2 L11.4 20.8 L14.2 17.4 V14 H17.6Z" fill="#e8452c"/>
<rect x="13.4" y="13.8" width="14" height="14" rx="3.6" fill="#f6b11c"/><rect x="14.6" y="15" width="11.6" height="11.6" rx="3" fill="#f59f1a"/>
<path d="M14.6 20.8 Q20.4 14.6 26.2 20.8 Q20.4 26.6 14.6 20.8Z" fill="#f2efe4"/><path d="M14.4 20.6 Q20.4 14.4 26.4 20.6" fill="none" stroke="#4c8a2a" stroke-width="1.3"/><circle cx="20.4" cy="20.8" r="2.9" fill="#3a3a3a"/><circle cx="21.3" cy="19.9" r=".9" fill="#fff"/></g></g></svg>
<span style="left:126.4px;top:766.60px;font-size:15px;color:#fff;letter-spacing:0.485px;text-shadow:1px 1px 1px rgba(0,0,0,.95),1px 1px 2px rgba(0,0,0,.9),0 1px 3px rgba(0,0,0,.75),0 0 2px rgba(0,0,0,.6);">logo</span>
<svg class="abs" style="left:27.0px;top:823px" width="40" height="40" viewBox="0 0 40 40"><defs><linearGradient id="eg1_17" x1="0" y1="0" x2=".6" y2="1"><stop offset="0" stop-color="#2fb4ea"/><stop offset=".45" stop-color="#1b86d8"/><stop offset="1" stop-color="#0b4f9e"/></linearGradient><linearGradient id="eg2_17" x1="0" y1=".4" x2="1" y2=".2"><stop offset="0" stop-color="#2aa9e6"/><stop offset=".45" stop-color="#34c4c8"/><stop offset=".75" stop-color="#55d676"/><stop offset="1" stop-color="#7ee04a"/></linearGradient>
<mask id="egm_17"><rect x="-2" y="-2" width="46" height="46" fill="#fff"/><path d="M42 25.4 L38.8 26.2 C34 27.6 29.6 27.2 26.8 24.4 C24.6 22 25.4 19 24.2 17 C23 15.4 21.2 15.8 21.6 17.6 C22.4 20.2 21.4 23.6 24.2 27 C27.6 30.8 33 31 37.8 30 L42 29.2Z" fill="#000"/></mask></defs>
<g mask="url(#egm_17)"><circle cx="20" cy="20" r="19.6" fill="url(#eg1_17)"/>
<path d="M20 .4 A19.6 19.6 0 0 1 39.6 18.4 C39.6 25.8 33.6 28 29.2 28 C24.8 28 23 25.6 23.4 23.8 C24.4 22.2 26 21.2 26 18.4 C26 14 21.4 11.2 16.6 11.2 C9 11.2 1.6 16 .4 20 A19.6 19.6 0 0 1 20 .4Z" fill="url(#eg2_17)"/>
<path d="M11.4 23.2 C11.4 32 18.6 38.6 26.8 37.8 C32 37 35.8 33.4 37.4 29.6 C34.6 32 29.6 33 25.8 31.4 C20.4 29.4 17.8 24.2 19.4 20 C15.6 19.4 11.4 20.4 11.4 23.2Z" fill="#0e4896" opacity=".92"/></g><rect x=".3" y="23.3" width="16.2" height="16.2" fill="#f4f4f4" stroke="#c9ccd2" stroke-width=".7"/><path d="M4.6 37.6 C3.4 32.6 5.4 29.4 9.2 29.2 L7.2 27 L13.8 26 L12.9 32.8 L10.9 30.9 C8.2 31.2 6.4 33.4 7.4 37.2 Z" fill="#2f5fa8"/></svg>
<span style="left:15.8px;top:868.60px;font-size:15px;color:#fff;letter-spacing:0.184px;text-shadow:1px 1px 1px rgba(0,0,0,.95),1px 1px 2px rgba(0,0,0,.9),0 1px 3px rgba(0,0,0,.75),0 0 2px rgba(0,0,0,.6);">Microsoft</span>
<span style="left:30.2px;top:888.60px;font-size:15px;color:#fff;letter-spacing:-0.383px;text-shadow:1px 1px 1px rgba(0,0,0,.95),1px 1px 2px rgba(0,0,0,.9),0 1px 3px rgba(0,0,0,.75),0 0 2px rgba(0,0,0,.6);">Edge</span>
<svg class="abs" style="left:121.6px;top:823px" width="40" height="40" viewBox="0 0 40 40"><g transform="translate(0 2)"><path d="M7 1 H27.6 L33.6 7 V35 H7Z" fill="#fdfdfd" stroke="#c8ccd0" stroke-width=".8"/><path d="M27.6 1 V7 H33.6Z" fill="#d4d9de"/>
<rect x="4.6" y="2.8" width="21.6" height="8.2" fill="#c037c8"/><text x="15.4" y="9.5" font-size="6.6" font-weight="bold" fill="#fff" text-anchor="middle" letter-spacing=".6" font-family="Liberation Sans, sans-serif">PNG</text>
<g transform="translate(20.4 22.4) scale(1.1) translate(-20.4 -20.8)"><path d="M20.4 11.4 L23.2 14 H26.6 V17.4 L29.4 20.8 L26.6 24.2 V27.6 H23.2 L20.4 30.4 L17.6 27.6 H14.2 V24.2 L11.4 20.8 L14.2 17.4 V14 H17.6Z" fill="#e8452c"/>
<rect x="13.4" y="13.8" width="14" height="14" rx="3.6" fill="#f6b11c"/><rect x="14.6" y="15" width="11.6" height="11.6" rx="3" fill="#f59f1a"/>
<path d="M14.6 20.8 Q20.4 14.6 26.2 20.8 Q20.4 26.6 14.6 20.8Z" fill="#f2efe4"/><path d="M14.4 20.6 Q20.4 14.4 26.4 20.6" fill="none" stroke="#4c8a2a" stroke-width="1.3"/><circle cx="20.4" cy="20.8" r="2.9" fill="#3a3a3a"/><circle cx="21.3" cy="19.9" r=".9" fill="#fff"/></g></g></svg>
<span style="left:97.8px;top:868.60px;font-size:15px;color:#fff;letter-spacing:-0.393px;text-shadow:1px 1px 1px rgba(0,0,0,.95),1px 1px 2px rgba(0,0,0,.9),0 1px 3px rgba(0,0,0,.75),0 0 2px rgba(0,0,0,.6);">palla_sridha...</span>
<svg class="abs" style="left:27.0px;top:925px" width="40" height="40" viewBox="0 0 40 40"><circle cx="20" cy="20" r="19.6" fill="#fff"/>
<path d="M20 10.4 H36.9 A19.5 19.5 0 0 0 3.11 10.25 L11.7 25.1Z" fill="#e33b2e"/>
<path d="M28.3 24.8 L20 39.5 A19.5 19.5 0 0 0 36.9 10.4 H20Z" fill="#fbc116"/>
<path d="M11.7 24.8 L3.11 10.25 A19.5 19.5 0 0 0 20 39.5 L28.3 24.8Z" fill="#2da94f"/>
<circle cx="20" cy="20" r="9.6" fill="#fff"/><circle cx="20" cy="20" r="7.7" fill="#3f82f0"/><rect x=".3" y="23.3" width="16.2" height="16.2" fill="#f4f4f4" stroke="#c9ccd2" stroke-width=".7"/><path d="M4.6 37.6 C3.4 32.6 5.4 29.4 9.2 29.2 L7.2 27 L13.8 26 L12.9 32.8 L10.9 30.9 C8.2 31.2 6.4 33.4 7.4 37.2 Z" fill="#2f5fa8"/></svg>
<span style="left:22.6px;top:970.60px;font-size:15px;color:#fff;letter-spacing:0.072px;text-shadow:1px 1px 1px rgba(0,0,0,.95),1px 1px 2px rgba(0,0,0,.9),0 1px 3px rgba(0,0,0,.75),0 0 2px rgba(0,0,0,.6);">Google</span>
<span style="left:21.1px;top:990.60px;font-size:15px;color:#fff;letter-spacing:-0.259px;text-shadow:1px 1px 1px rgba(0,0,0,.95),1px 1px 2px rgba(0,0,0,.9),0 1px 3px rgba(0,0,0,.75),0 0 2px rgba(0,0,0,.6);">Chrome</span>
<svg class="abs" style="left:121.6px;top:925px" width="40" height="40" viewBox="0 0 40 40"><g transform="translate(0 2)"><path d="M7 1 H27.6 L33.6 7 V35 H7Z" fill="#fdfdfd" stroke="#c8ccd0" stroke-width=".8"/><path d="M27.6 1 V7 H33.6Z" fill="#d4d9de"/>
<rect x="4.6" y="2.8" width="21.6" height="8.2" fill="#e8323c"/><text x="15.4" y="9.5" font-size="6.6" font-weight="bold" fill="#fff" text-anchor="middle" letter-spacing=".6" font-family="Liberation Sans, sans-serif">JPG</text>
<g transform="translate(20.4 22.4) scale(1.1) translate(-20.4 -20.8)"><path d="M20.4 11.4 L23.2 14 H26.6 V17.4 L29.4 20.8 L26.6 24.2 V27.6 H23.2 L20.4 30.4 L17.6 27.6 H14.2 V24.2 L11.4 20.8 L14.2 17.4 V14 H17.6Z" fill="#e8452c"/>
<rect x="13.4" y="13.8" width="14" height="14" rx="3.6" fill="#f6b11c"/><rect x="14.6" y="15" width="11.6" height="11.6" rx="3" fill="#f59f1a"/>
<path d="M14.6 20.8 Q20.4 14.6 26.2 20.8 Q20.4 26.6 14.6 20.8Z" fill="#f2efe4"/><path d="M14.4 20.6 Q20.4 14.4 26.4 20.6" fill="none" stroke="#4c8a2a" stroke-width="1.3"/><circle cx="20.4" cy="20.8" r="2.9" fill="#3a3a3a"/><circle cx="21.3" cy="19.9" r=".9" fill="#fff"/></g></g></svg>
<span style="left:100.9px;top:970.60px;font-size:15px;color:#fff;letter-spacing:-0.610px;text-shadow:1px 1px 1px rgba(0,0,0,.95),1px 1px 2px rgba(0,0,0,.9),0 1px 3px rgba(0,0,0,.75),0 0 2px rgba(0,0,0,.6);">blue_venuk...</span>
</div>
<div id="dlg">
<span style="left:26.8px;top:15.42px;font-size:21.6px;color:#363636;letter-spacing:0.527px;">IMAP Account Settings</span>
<span style="left:27.2px;top:50.96px;font-size:18px;color:#6a6a6a;">r</span>
<span style="left:206.2px;top:50.96px;font-size:18px;color:#6a6a6a;width:16px;overflow:hidden;">m</span>
<div style="left:201.60000000000002px;top:57px;width:3px;height:9.4px;border-radius:0 5px 5px 0;border:1.4px solid #7a7a7a;border-left:none"></div>
<div style="left:49.5px;top:67.5px;width:7px;height:1.6px;background:#777;transform:rotate(-14deg)"></div>
<div style="left:136px;top:67.5px;width:7px;height:1.6px;background:#777;transform:rotate(-14deg)"></div>
<span style="left:26.7px;top:114.12px;font-size:18.4px;color:#2b6ab1;letter-spacing:0.345px;">Incoming mail</span>
<svg style="left:155.89999999999998px;top:119px" width="13" height="12" viewBox="0 0 13 12"><path d="M2.1 8.3 L6.2 3.3 L10.3 8.3" fill="none" stroke="#686868" stroke-width="2.5" stroke-linecap="round" stroke-linejoin="miter"/></svg>
<span style="left:75.0px;top:150.91px;font-size:18.3px;color:#565656;letter-spacing:-0.411px;">User name</span>
<div style="left:186.7px;top:147.2px;width:326.5px;height:30.4px;border:1px solid #2583d6;background:#fff;box-shadow:inset 0 0 0 1px rgba(43,138,220,.62);"></div>
<div style="left:197.39999999999998px;top:151.3px;width:184.80000000000007px;height:3px;background:#a6cdf0"></div>
<span style="left:75.0px;top:189.31px;font-size:18.3px;color:#565656;letter-spacing:-0.569px;">Password</span>
<div style="left:186.7px;top:185.5px;width:326.5px;height:30.5px;border:1px solid #ababab;background:#fff;"></div>
<span style="left:197.2px;top:191.69px;font-size:19.5px;color:#4f4f4f;letter-spacing:0.137px;">****************</span>
<svg style="left:480px;top:189px" width="30" height="22" viewBox="0 0 30 22"><path d="M2.8 11.6 C5.6 5.2 10.2 3.6 14.8 3.6 C19.6 3.6 24.2 5.4 26.8 11.6" fill="none" stroke="#555" stroke-width="1.5"/><circle cx="14.8" cy="13.6" r="4.1" fill="none" stroke="#555" stroke-width="1.6"/></svg>
<div style="left:194.3px;top:225.3px;width:20.0px;height:20.0px;border:1px solid #ababab;background:#fff;"></div>
<svg style="left:194.5px;top:226px" width="20" height="20" viewBox="0 0 20 20"><path d="M4.6 10.6 L8.2 14.6 L15.2 4.6" fill="none" stroke="#7d7d7d" stroke-width="1.7"/></svg>
<span style="left:223.3px;top:227.71px;font-size:18.3px;color:#3f3f3f;letter-spacing:-0.289px;">Remember password</span>
<span style="left:74.6px;top:265.11px;font-size:18.3px;color:#565656;letter-spacing:-0.850px;">Server</span>
<div style="left:139.2px;top:261.0px;width:292.6px;height:30.4px;border:1px solid #ababab;background:#fff;"></div>
<span style="left:150.5px;top:268.08px;font-size:16.8px;color:#555;letter-spacing:-0.957px;width:23.4px;overflow:hidden;">ima</span>
<span style="left:258.6px;top:268.08px;font-size:16.8px;color:#555;">m</span>
<div style="left:255.79999999999995px;top:274px;width:2.2px;height:8px;border-radius:0 4px 4px 0;border:1.3px solid #6a6a6a;border-left:none"></div>
<div style="left:178.39999999999998px;top:283.4px;width:1.6px;height:1.8px;background:#888"></div>
<div style="left:195.20000000000005px;top:283.8px;width:6.4px;height:1.6px;background:#777"></div>
<span style="left:464.7px;top:265.21px;font-size:18.3px;color:#565656;letter-spacing:-0.141px;">Port</span>
<div style="left:513.3px;top:261.0px;width:76.9px;height:30.4px;border:1px solid #ababab;background:#fff;"></div>
<span style="left:524.2px;top:267.68px;font-size:16.8px;color:#555;letter-spacing:-0.477px;">993</span>
<span style="left:75.0px;top:311.41px;font-size:18.3px;color:#565656;letter-spacing:0.189px;">Encryption method</span>
<div style="left:247.2px;top:307.5px;width:127.4px;height:31.5px;border:1px solid #ababab;background:#fdfdfd;"></div>
<span style="left:256.3px;top:314.76px;font-size:18.0px;color:#444;letter-spacing:-1.077px;">SSL/TLS</span>
<svg style="left:353.70000000000005px;top:318.7px" width="14" height="9" viewBox="0 0 14 9"><path d="M1 1.2 L12.2 1.2 L6.6 7.4 Z" fill="#606060"/></svg>
<div style="left:72.8px;top:356.7px;width:20.0px;height:19.7px;border:1px solid #ababab;background:#fff;"></div>
<span style="left:101.2px;top:359.31px;font-size:18.3px;color:#3f3f3f;letter-spacing:-0.135px;">Require logon using Secure Password Authentication (SPA)</span>
<span style="left:27.2px;top:403.82px;font-size:18.4px;color:#2b6ab1;letter-spacing:0.305px;">Outgoing mail</span>
<svg style="left:155.89999999999998px;top:408px" width="13" height="12" viewBox="0 0 13 12"><path d="M2.1 3.6 L6.2 8.6 L10.3 3.6" fill="none" stroke="#686868" stroke-width="2.5" stroke-linecap="round" stroke-linejoin="miter"/></svg>
<span style="left:26.7px;top:662.31px;font-size:18.3px;color:#1a6ec4;letter-spacing:-0.307px;">Go back</span>
<div style="left:488.70000000000005px;top:647.5px;width:123.5px;height:49.299999999999955px;background:#106ebe;border:1px solid #0d62ac"></div>
<span style="left:523.5px;top:663.26px;font-size:18.0px;color:#f2f6fb;letter-spacing:-0.588px;">Repair</span>
</div>
<div id="tb">
<div style="left:0;top:0;width:1920px;height:50px;background:linear-gradient(90deg,#21353f 0%,#22353f 30%,#21333e 50%,#20313f 62%,#1d2c42 73%,#1b2a46 85%,#1a2947 100%)"></div>
<svg style="left:19.5px;top:14.5px;" width="21" height="21" viewBox="0 0 21 21"><path fill="#fff" d="M0 3.0 L8.6 1.8 V9.9 H0Z M9.7 1.6 L21 0 V9.9 H9.7Z M0 11 H8.6 V19.1 L0 17.9Z M9.7 11 H21 V21 L9.7 19.4Z"/></svg>
<div style="left:60px;top:0;width:430px;height:49px;background:#f2f2f2;border-top:1px solid #f7f7f7"></div>
<div style="left:60px;top:49px;width:430px;height:1px;background:#c6c6c6"></div>
<svg style="left:74.0px;top:14.0px;" width="23" height="22" viewBox="0 0 23 22"><circle cx="13.6" cy="8.4" r="6.4" fill="none" stroke="#1d1d1d" stroke-width="1.5"/><path d="M9.0 13.0 L1.6 20.4" stroke="#1d1d1d" stroke-width="1.6" fill="none"/></svg>
<span style="left:110.8px;top:15.87px;font-size:18.7px;color:#2b2b2b;letter-spacing:-0.146px;">Type here to search</span>
<svg style="left:405.0px;top:7.0px;" width="32" height="38" viewBox="0 0 32 38"><defs><linearGradient id="ck1" x1="0" x2="1"><stop offset="0" stop-color="#f6a623"/><stop offset="1" stop-color="#ffe94a"/></linearGradient></defs>
<ellipse cx="7.5" cy="7" rx="6" ry="5.2" fill="url(#ck1)"/><ellipse cx="24.5" cy="7" rx="6" ry="5.2" fill="url(#ck1)"/>
<path d="M6.5 36.5 Q5.6 36.3 6.2 35 L9.6 30.5 H22.4 L25.8 35 Q26.4 36.3 25.5 36.5Z" fill="#f6ae2d"/>
<circle cx="16" cy="19.5" r="13.2" fill="#8a5248"/><circle cx="16" cy="19.5" r="9.8" fill="#e9e2f7"/>
<path d="M16 12.5 V20" stroke="#2a1d45" stroke-width="2.2" stroke-linecap="round"/><path d="M16.4 20 L19.4 23.2" stroke="#ff4a7a" stroke-width="2" stroke-linecap="round"/></svg>
<svg style="left:444.0px;top:12.0px;" width="31" height="33" viewBox="0 0 31 33"><defs><linearGradient id="gf1" x1="0" x2="1"><stop offset="0" stop-color="#c98459"/><stop offset="1" stop-color="#e9a985"/></linearGradient></defs>
<ellipse cx="9.5" cy="5.6" rx="6" ry="4.6" fill="#d9201f"/><ellipse cx="21.5" cy="5.6" rx="6" ry="4.6" fill="#d9201f"/><circle cx="15.5" cy="6" r="3.6" fill="#c51616"/>
<rect x="3" y="13" width="25" height="19.5" rx="2.4" fill="url(#gf1)"/><rect x="1" y="8.2" width="29" height="8" rx="1.8" fill="url(#gf1)"/><rect x="1" y="15.4" width="29" height="1" fill="#b97750" opacity=".6"/>
<rect x="12.2" y="5" width="6.6" height="27.5" fill="#c41717"/></svg>
<svg style="left:509.0px;top:14.0px;" width="22" height="21" viewBox="0 0 22 21"><g fill="none" stroke="#fff" stroke-width="1.3"><rect x="1.6" y="5.6" width="11.6" height="9.6"/><path d="M1.6 3.8 V1.2 M13.2 3.8 V1.2 M1.2 2.6 H13.6 M1.6 17.2 V19.8 M13.2 17.2 V19.8 M1.2 18.4 H13.6"/><path d="M19 1 V6.4 M19 9.6 V20"/></g><rect x="17.4" y="6.4" width="3.2" height="3.2" fill="#fff"/></svg>
<div style="left:620.8px;top:47px;width:51.0px;height:3px;background:#f7de93"></div>
<div style="left:682.8px;top:47px;width:51.4px;height:3px;background:#f7de93"></div>
<div style="left:745px;top:47px;width:51.0px;height:3px;background:#f7de93"></div>
<div style="left:869.2px;top:47px;width:51.0px;height:3px;background:#f7de93"></div>
<div style="left:930.8px;top:47px;width:51.2px;height:3px;background:#f7de93"></div>
<svg style="left:568.4px;top:9.2px;" width="31.2" height="31.2" viewBox="0 0 40 40"><defs><linearGradient id="eg1_21" x1="0" y1="0" x2=".6" y2="1"><stop offset="0" stop-color="#2fb4ea"/><stop offset=".45" stop-color="#1b86d8"/><stop offset="1" stop-color="#0b4f9e"/></linearGradient><linearGradient id="eg2_21" x1="0" y1=".4" x2="1" y2=".2"><stop offset="0" stop-color="#2aa9e6"/><stop offset=".45" stop-color="#34c4c8"/><stop offset=".75" stop-color="#55d676"/><stop offset="1" stop-color="#7ee04a"/></linearGradient>
<mask id="egm_21"><rect x="-2" y="-2" width="46" height="46" fill="#fff"/><path d="M42 25.4 L38.8 26.2 C34 27.6 29.6 27.2 26.8 24.4 C24.6 22 25.4 19 24.2 17 C23 15.4 21.2 15.8 21.6 17.6 C22.4 20.2 21.4 23.6 24.2 27 C27.6 30.8 33 31 37.8 30 L42 29.2Z" fill="#000"/></mask></defs>
<g mask="url(#egm_21)"><circle cx="20" cy="20" r="19.6" fill="url(#eg1_21)"/>
<path d="M20 .4 A19.6 19.6 0 0 1 39.6 18.4 C39.6 25.8 33.6 28 29.2 28 C24.8 28 23 25.6 23.4 23.8 C24.4 22.2 26 21.2 26 18.4 C26 14 21.4 11.2 16.6 11.2 C9 11.2 1.6 16 .4 20 A19.6 19.6 0 0 1 20 .4Z" fill="url(#eg2_21)"/>
<path d="M11.4 23.2 C11.4 32 18.6 38.6 26.8 37.8 C32 37 35.8 33.4 37.4 29.6 C34.6 32 29.6 33 25.8 31.4 C20.4 29.4 17.8 24.2 19.4 20 C15.6 19.4 11.4 20.4 11.4 23.2Z" fill="#0e4896" opacity=".92"/></g></svg>
<svg style="left:631.0px;top:11.6px;" width="30" height="24" viewBox="0 0 30 24"><path d="M1 3.2 Q1 1.6 2.6 1.6 H11 L13.4 4.4 H1Z" fill="#f0a30a"/><rect x="1" y="3.6" width="28" height="19.6" rx="1.2" fill="#ffd658"/><rect x="1" y="19.8" width="28" height="3.4" fill="#f5c142"/>
<path d="M5.6 23.2 V13.6 Q5.6 12.6 6.6 12.6 H23.4 Q24.4 12.6 24.4 13.6 V23.2 H20 V17 H10 V23.2Z" fill="#3d9be9"/></svg>
<svg style="left:692.1px;top:8.8px;" width="31.4" height="31.4" viewBox="0 0 32 32"><circle cx="16" cy="16" r="15" fill="#fff"/>
<path d="M16 16 L3.01 8.5 A15 15 0 0 1 28.99 8.5 Z" fill="#e33b2e"/>
<path d="M16 16 L28.99 8.5 A15 15 0 0 1 16 31 Z" fill="#fbc116"/>
<path d="M16 16 L16 31 A15 15 0 0 1 3.01 8.5 Z" fill="#2da94f"/>
<path d="M16 8.6 H28.9 A15 15 0 0 0 3.01 8.5 L9.6 19.9Z" fill="#e33b2e"/>
<path d="M22.4 19.7 L16 31 A15 15 0 0 0 28.9 8.6 H16Z" fill="#fbc116"/>
<path d="M9.6 19.7 L3.05 8.5 A15 15 0 0 0 16 31 L22.4 19.7Z" fill="#2da94f"/>
<circle cx="16" cy="16" r="7.4" fill="#fff"/><circle cx="16" cy="16" r="5.9" fill="#3f82f0"/><g transform="translate(-7.30 -8.73) scale(1.020)"><clipPath id="avt"><circle cx="30" cy="31.7" r="10"/></clipPath><g clip-path="url(#avt)"><rect x="19" y="21" width="22" height="22" fill="#efd9dc"/><path d="M19 42 L21 37 Q30 45 39.4 35 L41 42Z" fill="#c6562e"/><ellipse cx="29.6" cy="31.8" rx="7" ry="8.8" fill="#c78b69"/><path d="M23 29 Q23.6 22.4 29.6 22.2 Q35.8 22.4 36.4 29 Q33.6 25.2 29.6 25.2 Q25.6 25.2 23 29Z" fill="#dcbfae"/><path d="M24.2 30.4 h4.6 M30.6 30.4 h4.6 M28.8 30.4 h1.8" stroke="#6e5a52" stroke-width=".8"/><path d="M26 35.4 Q29.6 38.6 33.4 35.4 Q29.6 36.6 26 35.4Z" fill="#f7efe9" stroke="#7d4634" stroke-width=".6"/></g></g></svg>
<svg style="left:754.1px;top:8.8px;" width="31.4" height="31.4" viewBox="0 0 32 32"><circle cx="16" cy="16" r="15" fill="#fff"/>
<path d="M16 16 L3.01 8.5 A15 15 0 0 1 28.99 8.5 Z" fill="#e33b2e"/>
<path d="M16 16 L28.99 8.5 A15 15 0 0 1 16 31 Z" fill="#fbc116"/>
<path d="M16 16 L16 31 A15 15 0 0 1 3.01 8.5 Z" fill="#2da94f"/>
<path d="M16 8.6 H28.9 A15 15 0 0 0 3.01 8.5 L9.6 19.9Z" fill="#e33b2e"/>
<path d="M22.4 19.7 L16 31 A15 15 0 0 0 28.9 8.6 H16Z" fill="#fbc116"/>
<path d="M9.6 19.7 L3.05 8.5 A15 15 0 0 0 16 31 L22.4 19.7Z" fill="#2da94f"/>
<circle cx="16" cy="16" r="7.4" fill="#fff"/><circle cx="16" cy="16" r="5.9" fill="#3f82f0"/><circle cx="23.3" cy="23.6" r="10.2" fill="#14909c"/><text x="23.3" y="28.4" font-size="13.5" font-weight="bold" text-anchor="middle" fill="#bfe9ee" font-family="Liberation Sans, sans-serif">P</text></svg>
<svg style="left:816.0px;top:8.8px;" width="31.4" height="31.4" viewBox="0 0 32 32"><circle cx="16" cy="16" r="15" fill="#fff"/>
<path d="M16 16 L3.01 8.5 A15 15 0 0 1 28.99 8.5 Z" fill="#e33b2e"/>
<path d="M16 16 L28.99 8.5 A15 15 0 0 1 16 31 Z" fill="#fbc116"/>
<path d="M16 16 L16 31 A15 15 0 0 1 3.01 8.5 Z" fill="#2da94f"/>
<path d="M16 8.6 H28.9 A15 15 0 0 0 3.01 8.5 L9.6 19.9Z" fill="#e33b2e"/>
<path d="M22.4 19.7 L16 31 A15 15 0 0 0 28.9 8.6 H16Z" fill="#fbc116"/>
<path d="M9.6 19.7 L3.05 8.5 A15 15 0 0 0 16 31 L22.4 19.7Z" fill="#2da94f"/>
<circle cx="16" cy="16" r="7.4" fill="#fff"/><circle cx="16" cy="16" r="5.9" fill="#3f82f0"/><circle cx="23.4" cy="23.8" r="7.4" fill="#5b2bb5"/><text x="23.4" y="27.4" font-size="10" text-anchor="middle" fill="#e6dcff" font-family="Liberation Sans, sans-serif">V</text></svg>
<svg style="left:880.0px;top:11.0px;" width="28" height="28" viewBox="0 0 28 28"><rect x="13" y="5.4" width="14.6" height="15.6" fill="#0f6fc6"/><rect x="15" y="7.6" width="11" height="11" fill="#fff"/><path d="M15 7.8 L20.5 13 L26 7.8" fill="none" stroke="#0f6fc6" stroke-width="1.5"/>
<path d="M0 3.2 L16.4 0 V28 L0 24.8Z" fill="#0f6fc6"/><ellipse cx="8.2" cy="14" rx="4.4" ry="5.4" fill="none" stroke="#fff" stroke-width="2.5"/></svg>
<svg style="left:940.6px;top:9.0px;" width="31" height="31" viewBox="0 0 40 40"><defs><linearGradient id="np1_22" x1="0" x2="0" y1="0" y2="1"><stop offset="0" stop-color="#ffffff"/><stop offset=".38" stop-color="#f1f6e4"/><stop offset=".58" stop-color="#cfe85a"/><stop offset="1" stop-color="#35b02a"/></linearGradient></defs>
<path d="M2.6 4.6 L20.6 3.2 L27 8.4 L29.2 34.6 L6 36.6Z" fill="url(#np1_22)" stroke="#9aa09a" stroke-width=".8"/><path d="M20.6 3.2 L21.4 8.6 L27 8.4Z" fill="#e4e8ea" stroke="#9aa09a" stroke-width=".6"/>
<path d="M3.4 5.6 L20 4.3" stroke="#5d7fb8" stroke-width="1.5" stroke-dasharray="1 1.1"/>
<path d="M4 9.2 L21 8 M4.2 11.4 L26.6 10 M4.4 13.6 L26.8 12.2" stroke="#b5cdea" stroke-width=".6"/>
<path d="M8 21.6 C7 16.8 10 13.2 14.4 12.2 C18 11.4 21.6 12.6 22.6 15.6 C23.2 18 21.6 19.6 19.6 19.8 C21.6 20.6 22.4 22.6 21 24 C18.6 25.8 14 24.8 12.6 22.8 C11.2 23.8 9 23.4 8 21.6Z" fill="#7fd23c" stroke="#1f4d12" stroke-width="1"/>
<circle cx="17.6" cy="12.6" r="2.3" fill="#fafaf6" stroke="#333" stroke-width=".8"/><circle cx="21" cy="13.4" r="1.9" fill="#fafaf6" stroke="#333" stroke-width=".7"/><circle cx="18" cy="12.8" r=".8" fill="#111"/><circle cx="21.2" cy="13.6" r=".7" fill="#111"/>
<path d="M8 24.6 l2 -1 l1.6 1.2 l2 -1 l2 1.2 l2 -.8 l2 1" stroke="#1f4d12" stroke-width=".8" fill="none"/>
<path d="M17.6 30.6 v4 M18.4 32.6 h7 M21 31.4 v2.4 M23.4 31.4 v2.4" stroke="#14521a" stroke-width=".9" fill="none"/>
<path d="M36.4 1 L38.6 2.2 L28.6 25.8 L25.6 28.4 L26 24.6Z" fill="#f4b41f" stroke="#94640f" stroke-width=".6"/><path d="M36.4 1 L38.6 2.2 L37.9 3.9 L35.7 2.7Z" fill="#b3402f"/><path d="M25.8 26.4 L25.6 28.4 L27.2 27Z" fill="#333"/></svg>
<svg style="left:1505.0px;top:14.6px;" width="21" height="21" viewBox="0 0 28 28"><rect x="13" y="5.4" width="14.6" height="15.6" fill="#0f6fc6"/><rect x="15" y="7.6" width="11" height="11" fill="#fff"/><path d="M15 7.8 L20.5 13 L26 7.8" fill="none" stroke="#0f6fc6" stroke-width="1.5"/>
<path d="M0 3.2 L16.4 0 V28 L0 24.8Z" fill="#0f6fc6"/><ellipse cx="8.2" cy="14" rx="4.4" ry="5.4" fill="none" stroke="#fff" stroke-width="2.5"/></svg>
<svg style="left:1535.0px;top:15.0px;" width="20" height="20" viewBox="0 0 40 40"><path d="M38.2 25 C37 32 31 38 24 38.3 C18 38.5 12.5 35.5 10 31 C9 29 9 26 10.5 24 C12 28 16 31 21 31 C27 31 33 28 36 23 C37 23.5 38 24 38.2 25Z" fill="#fbbc12"/>
<path d="M1.7 21 C2 15 6 10 12.5 9.4 C16 9.2 20 10.5 22.5 13.2 C18 12 13.5 13.5 11 17.5 C9 20.5 9 24 10.5 27 C10 33 14 36 18 37.6 C8 36 2 29 1.7 21Z" fill="#f2291f"/>
<path d="M1.5 14 C3 6 10 1.3 16 1.4 C22 1.5 27 4 29 8 C31 12 31 15 29.3 17 C28 13 24 9 19 8.6 C13 8.4 8 11 5.5 16 C4 18 2.5 19 1.5 21 C1 18.6 1 16 1.5 14Z" fill="#3b7bf5"/>
<path d="M25 1.3 C31 1.5 37 6 38.3 13 C39.3 20 36 26 31 28.5 C27 30.5 23 30.2 21.5 29.6 C26 28.5 30 25 30.8 20.5 C31.6 16 30.5 11 27 7 C26 5 25 3 25 1.3Z" fill="#12b022"/></svg>
<svg style="left:1564.6px;top:14.6px;" width="20" height="21" viewBox="0 0 20 21"><rect x=".8" y="1" width="18.4" height="19" rx="7.4" fill="#0b8f97"/><rect x="2.6" y="2.8" width="14.8" height="15.4" rx="6" fill="#fff"/>
<path d="M14.4 11.2 H6.8 A3.4 3.4 0 0 0 13.6 13.4 M6.8 11 A3.6 3.6 0 0 1 14.4 11" fill="none" stroke="#0b8f97" stroke-width="3"/></svg>
<svg style="left:1597.6px;top:14.0px;" width="18" height="22" viewBox="0 0 18 22"><g fill="none" stroke="#fff" stroke-width="1.2"><rect x="3.2" y="1" width="7.4" height="5.2"/><path d="M1.8 6.2 H12 V20.4 H1.8Z" /><path d="M10.6 17.6 L12.8 20 L17 14.8" stroke="#cfd6e2"/></g><rect x="5" y="3" width="1.3" height="1.3" fill="#fff"/><rect x="7.5" y="3" width="1.3" height="1.3" fill="#fff"/></svg>
<svg style="left:1624.6px;top:14.6px;" width="21" height="21" viewBox="0 0 21 21"><rect x=".6" y=".6" width="19.8" height="19.8" rx="2.4" fill="#3a3d3f" stroke="#6d7278" stroke-width="1"/>
<path d="M3 11 C5 6.4 10 4.8 13.6 6.4 L18 5 V16.4 H9 C6 15.6 4 13.6 3 11Z" fill="#7ab317"/>
<path d="M5.4 10.8 C7 8 10.4 7.4 12.4 8.8 C14 10.4 12.8 13 10 13.4 C8 13.2 6.4 12.2 5.4 10.8Z" fill="none" stroke="#2c3a10" stroke-width="1"/><circle cx="9.8" cy="10.8" r="1.3" fill="#2c3a10"/></svg>
<svg style="left:1654.0px;top:17.0px;" width="22" height="15" viewBox="0 0 22 15"><path d="M5.2 14.4 H17.6 A3.8 3.8 0 0 0 18.4 6.9 A5.4 5.4 0 0 0 8.4 4.2 A4.4 4.4 0 0 0 3.4 8.2 A3.2 3.2 0 0 0 5.2 14.4Z" fill="#e8eaee"/><path d="M8.4 4.2 A5.4 5.4 0 0 1 18.4 6.9 L11 10.6 L6 7.2Z" fill="#b9bec8"/><path d="M3.4 8.2 A4.4 4.4 0 0 1 8.4 4.2 L12.4 9.8 L5 13Z" fill="#d3d6dd" opacity=".8"/>
<path d="M5.2 14.4 H17.6 A3.8 3.8 0 0 0 20.6 9.2 L11 10.6 L3.2 12.6 A3.2 3.2 0 0 0 5.2 14.4Z" fill="#f4f5f7"/></svg>
<svg style="left:1684.6px;top:14.0px;" width="22" height="23" viewBox="0 0 22 23"><path d="M9.4 1 C12 2.6 15 3.4 18 3.4 V9.6 C18 14.6 14.6 18.6 9.4 20.6 C4.2 18.6 .8 14.6 .8 9.6 V3.4 C3.8 3.4 6.8 2.6 9.4 1Z" fill="#fff" stroke="#101010" stroke-width="1.1"/>
<path d="M9.4 1.4 V20.2 M1 9.8 H17.8" stroke="#111" stroke-width="1.3"/>
<circle cx="15.6" cy="16.6" r="5.2" fill="#14964a"/><path d="M13 16.6 L14.9 18.6 L18.2 14.8" fill="none" stroke="#fff" stroke-width="1.4"/></svg>
<svg style="left:1714.0px;top:15.6px;" width="22" height="19" viewBox="0 0 22 19"><g fill="none" stroke="#fff" stroke-width="1.2"><path d="M4.4 1 H21 V13.2 H4.4"/><path d="M12.8 13.2 V17.6 M8.4 17.6 H17"/><rect x="1" y="3.2" width="3.4" height="4.6"/><path d="M2.7 7.8 V17.6"/></g></svg>
<svg style="left:1743.6px;top:14.6px;" width="24" height="21" viewBox="0 0 24 21"><g fill="none" stroke="#fff" stroke-width="1.2"><path d="M1.4 7 H4.4 L8.6 2.8 V18.2 L4.4 14 H1.4Z"/><path d="M11.6 8.2 Q13.2 10.5 11.6 12.8"/><path d="M14.6 5.6 Q18 10.5 14.6 15.4" stroke="#8e96a6"/><path d="M17.8 3.2 Q22.6 10.5 17.8 17.8" stroke="#6f788a"/></g></svg>
<span style="left:1783.2px;top:6.27px;font-size:14.8px;color:#fff;letter-spacing:-0.669px;">12:50 PM</span>
<span style="left:1775.0px;top:29.17px;font-size:14.8px;color:#fff;letter-spacing:0.162px;">11/25/2022</span>
<svg style="left:1868.4px;top:14.4px;" width="22" height="22" viewBox="0 0 22 22"><path d="M1.2 1.2 H20.4 V16.8 H13.2 L10.8 19.4 L8.4 16.8 H1.2Z" fill="none" stroke="#fff" stroke-width="1.3"/></svg>
<div style="left:1914px;top:0;width:1px;height:50px;background:#7c8596"></div>
</div>
</body></html>
